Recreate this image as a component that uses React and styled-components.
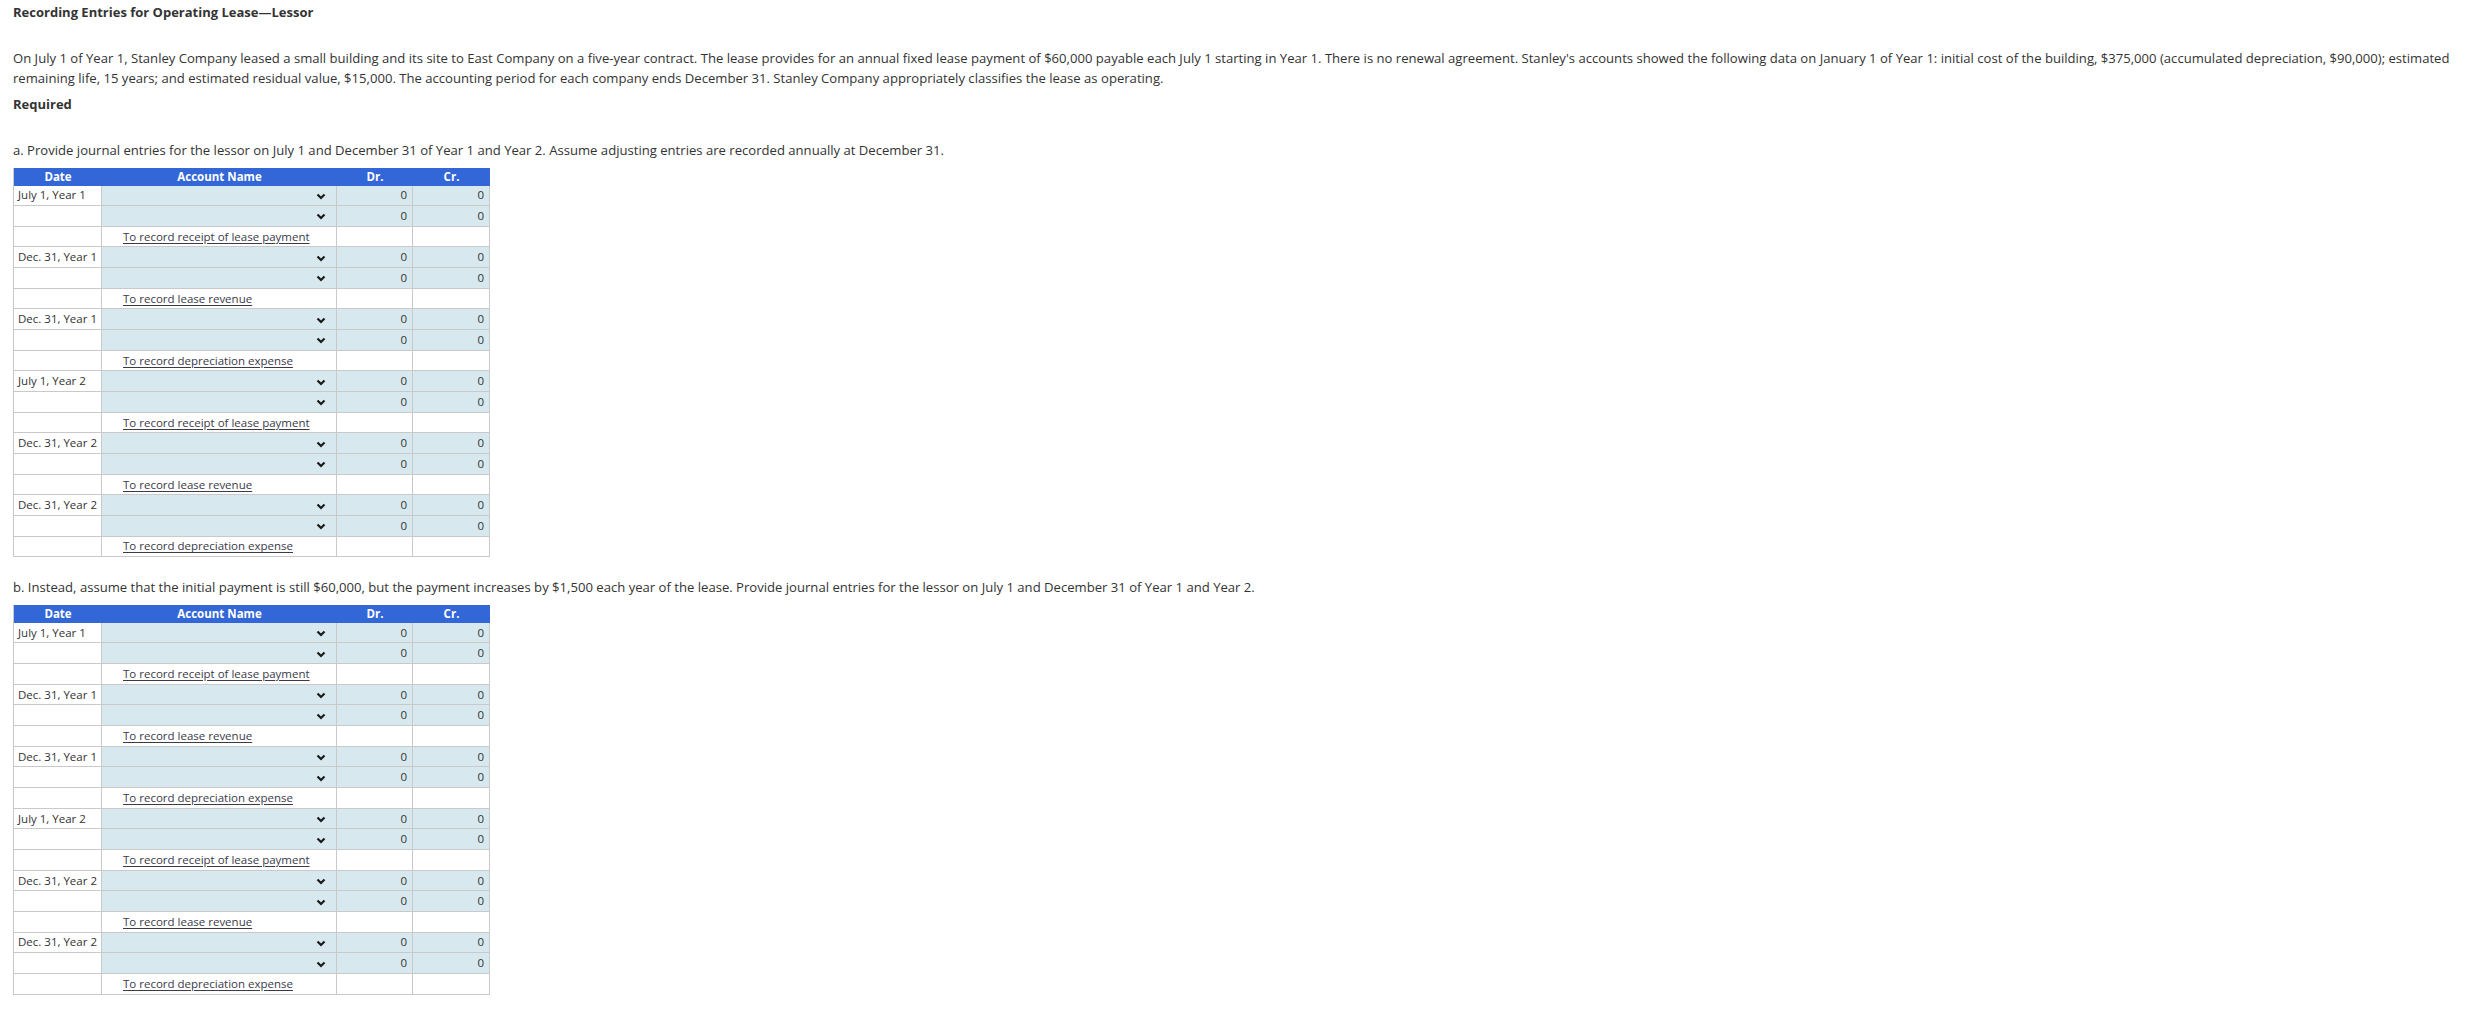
import styled, { createGlobalStyle } from 'styled-components';

const GlobalStyle = createGlobalStyle`
  body {
    margin: 0;
    background: #ffffff;
    font-family: "Open Sans", "Liberation Sans", sans-serif;
    color: #333333;
  }
`;

const Page = styled.div`
  padding: 2px 13px 20px 13px;
  font-size: 13.1px;
  line-height: 20px;
`;

const Title = styled.h1`
  margin: 0;
  font-size: 13px;
  font-weight: 700;
  line-height: 20px;
`;

const Intro = styled.p`
  margin: 27px 0 0;
  line-height: 19.5px;
`;

const Required = styled.div`
  margin-top: 6px;
  font-weight: 700;
  font-size: 13px;
`;

const Part = styled.p`
  margin: ${(p) => (p.$first ? '26px' : '20px')} 0 7.5px;
`;

const Grid = styled.div`
  display: grid;
  grid-template-columns: 88px 235px 76px 77px;
  width: 476px;
  border-left: 1px solid #c9c9c9;
  font-size: 11.5px;
`;

const HeadCell = styled.div`
  height: 18px;
  line-height: 18px;
  background: #3366d6;
  color: #ffffff;
  font-weight: 700;
  text-align: center;
`;

const Cell = styled.div`
  box-sizing: border-box;
  height: 20.67px;
  display: flex;
  align-items: center;
  justify-content: ${(p) => (p.$right ? 'flex-end' : 'flex-start')};
  padding: ${(p) => (p.$right ? '0 5px 0 0' : '0 0 0 4px')};
  background: ${(p) => (p.$input ? '#d7e8ef' : '#ffffff')};
  border-right: 1px solid #c9c9c9;
  border-bottom: 1px solid #c9c9c9;
  white-space: nowrap;
`;

const SelectCell = styled(Cell)`
  padding: 2px 10px 0 0;
`;

const Memo = styled.span`
  padding-left: 17px;
  color: #3a3a4a;
  text-decoration: underline;
  text-underline-offset: 2px;
`;

const Chevron = () => (
  <svg width="10" height="7" viewBox="0 0 10 7">
    <path d="M1.5 1.5 L5 5 L8.5 1.5" fill="none" stroke="#1a1a1a" strokeWidth="2.2" />
  </svg>
);

const entries = [
  ['July 1, Year 1', 'To record receipt of lease payment'],
  ['Dec. 31, Year 1', 'To record lease revenue'],
  ['Dec. 31, Year 1', 'To record depreciation expense'],
  ['July 1, Year 2', 'To record receipt of lease payment'],
  ['Dec. 31, Year 2', 'To record lease revenue'],
  ['Dec. 31, Year 2', 'To record depreciation expense'],
];

const InputRow = ({ date }) => (
  <>
    <Cell>{date}</Cell>
    <SelectCell $input $right>
      <Chevron />
    </SelectCell>
    <Cell $input $right>0</Cell>
    <Cell $input $right>0</Cell>
  </>
);

const JournalTable = () => (
  <Grid>
    <HeadCell>Date</HeadCell>
    <HeadCell>Account Name</HeadCell>
    <HeadCell>Dr.</HeadCell>
    <HeadCell>Cr.</HeadCell>
    {entries.map(([date, memo], i) => (
      <div key={i} style={{ display: 'contents' }}>
        <InputRow date={date} />
        <InputRow date="" />
        <Cell />
        <Cell>
          <Memo>{memo}</Memo>
        </Cell>
        <Cell />
        <Cell />
      </div>
    ))}
  </Grid>
);

const App = () => (
  <>
    <GlobalStyle />
    <Page>
      <Title>Recording Entries for Operating Lease—Lessor</Title>
      <Intro>
        On July 1 of Year 1, Stanley Company leased a small building and its site to East Company on a
        five-year contract. The lease provides for an annual fixed lease payment of $60,000 payable each
        July 1 starting in Year 1. There is no renewal agreement. Stanley's accounts showed the following
        data on January 1 of Year 1: initial cost of the building, $375,000 (accumulated depreciation,
        $90,000); estimated remaining life, 15 years; and estimated residual value, $15,000. The accounting
        period for each company ends December 31. Stanley Company appropriately classifies the lease as
        operating.
      </Intro>
      <Required>Required</Required>
      <Part $first>
        a. Provide journal entries for the lessor on July 1 and December 31 of Year 1 and Year 2. Assume
        adjusting entries are recorded annually at December 31.
      </Part>
      <JournalTable />
      <Part>
        b. Instead, assume that the initial payment is still $60,000, but the payment increases by $1,500
        each year of the lease. Provide journal entries for the lessor on July 1 and December 31 of Year 1
        and Year 2.
      </Part>
      <JournalTable />
    </Page>
  </>
);

export default App;
